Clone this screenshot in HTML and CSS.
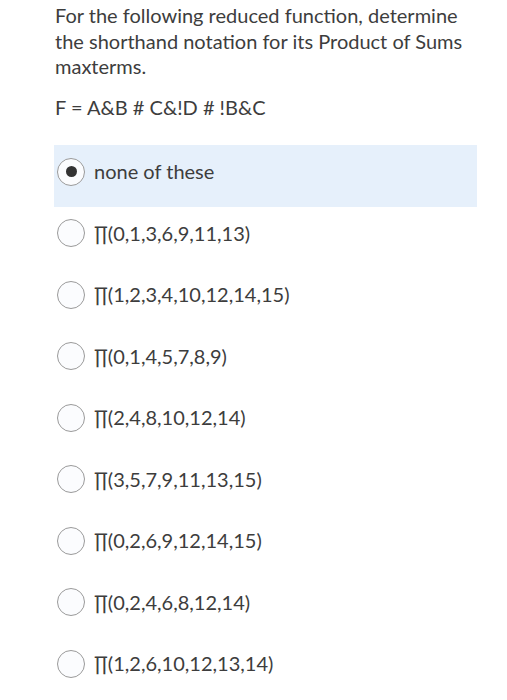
FILE: index.html
```html
<!DOCTYPE html>
<html>
<head>
<meta charset="utf-8">
<link rel="stylesheet" href="styles.css">
</head>
<body>
<div class="page">
  <p class="question">For the following reduced function, determine the shorthand notation for its Product of Sums maxterms.</p>
  <p class="formula">F = A&amp;B # C&amp;!D # !B&amp;C</p>
  <div class="options">
    <div class="option selected"><span class="radio checked"></span><span class="label">none of these</span></div>
    <div class="option"><span class="radio"></span><span class="label">∏(0,1,3,6,9,11,13)</span></div>
    <div class="option"><span class="radio"></span><span class="label">∏(1,2,3,4,10,12,14,15)</span></div>
    <div class="option"><span class="radio"></span><span class="label">∏(0,1,4,5,7,8,9)</span></div>
    <div class="option"><span class="radio"></span><span class="label">∏(2,4,8,10,12,14)</span></div>
    <div class="option"><span class="radio"></span><span class="label">∏(3,5,7,9,11,13,15)</span></div>
    <div class="option"><span class="radio"></span><span class="label">∏(0,2,6,9,12,14,15)</span></div>
    <div class="option"><span class="radio"></span><span class="label">∏(0,2,4,6,8,12,14)</span></div>
    <div class="option"><span class="radio"></span><span class="label">∏(1,2,6,10,12,13,14)</span></div>
  </div>
</div>
</body>
</html>
```
FILE: styles.css
```css
html, body {
  margin: 0;
  padding: 0;
  background: #ffffff;
}
body {
  font-family: Lato, "Liberation Sans", sans-serif;
  font-size: 20px;
  color: #3d3d3d;
}
.page {
  padding: 3px 30px 0 54px;
}
.question {
  margin: 0;
  padding-left: 1px;
  line-height: 25.5px;
}
.formula {
  margin: 15.5px 0 0 0;
  padding-left: 1px;
  line-height: 25.5px;
}
.options {
  margin-top: 24.5px;
  display: flex;
  flex-direction: column;
}
.option {
  height: 61.5px;
  box-sizing: border-box;
  padding: 0 0 8px 3px;
  display: flex;
  align-items: center;
  gap: 9px;
}
.option.selected {
  background: #e6f0fb;
}
.radio {
  width: 28px;
  height: 28px;
  box-sizing: border-box;
  border: 1px solid #9a9a9a;
  border-radius: 50%;
  background: #fbfcfe;
  display: flex;
  align-items: center;
  justify-content: center;
  flex: none;
}
.radio.checked::after {
  content: "";
  width: 11px;
  height: 11px;
  border-radius: 50%;
  background: #333333;
}
.label {
  line-height: 25px;
}
```
